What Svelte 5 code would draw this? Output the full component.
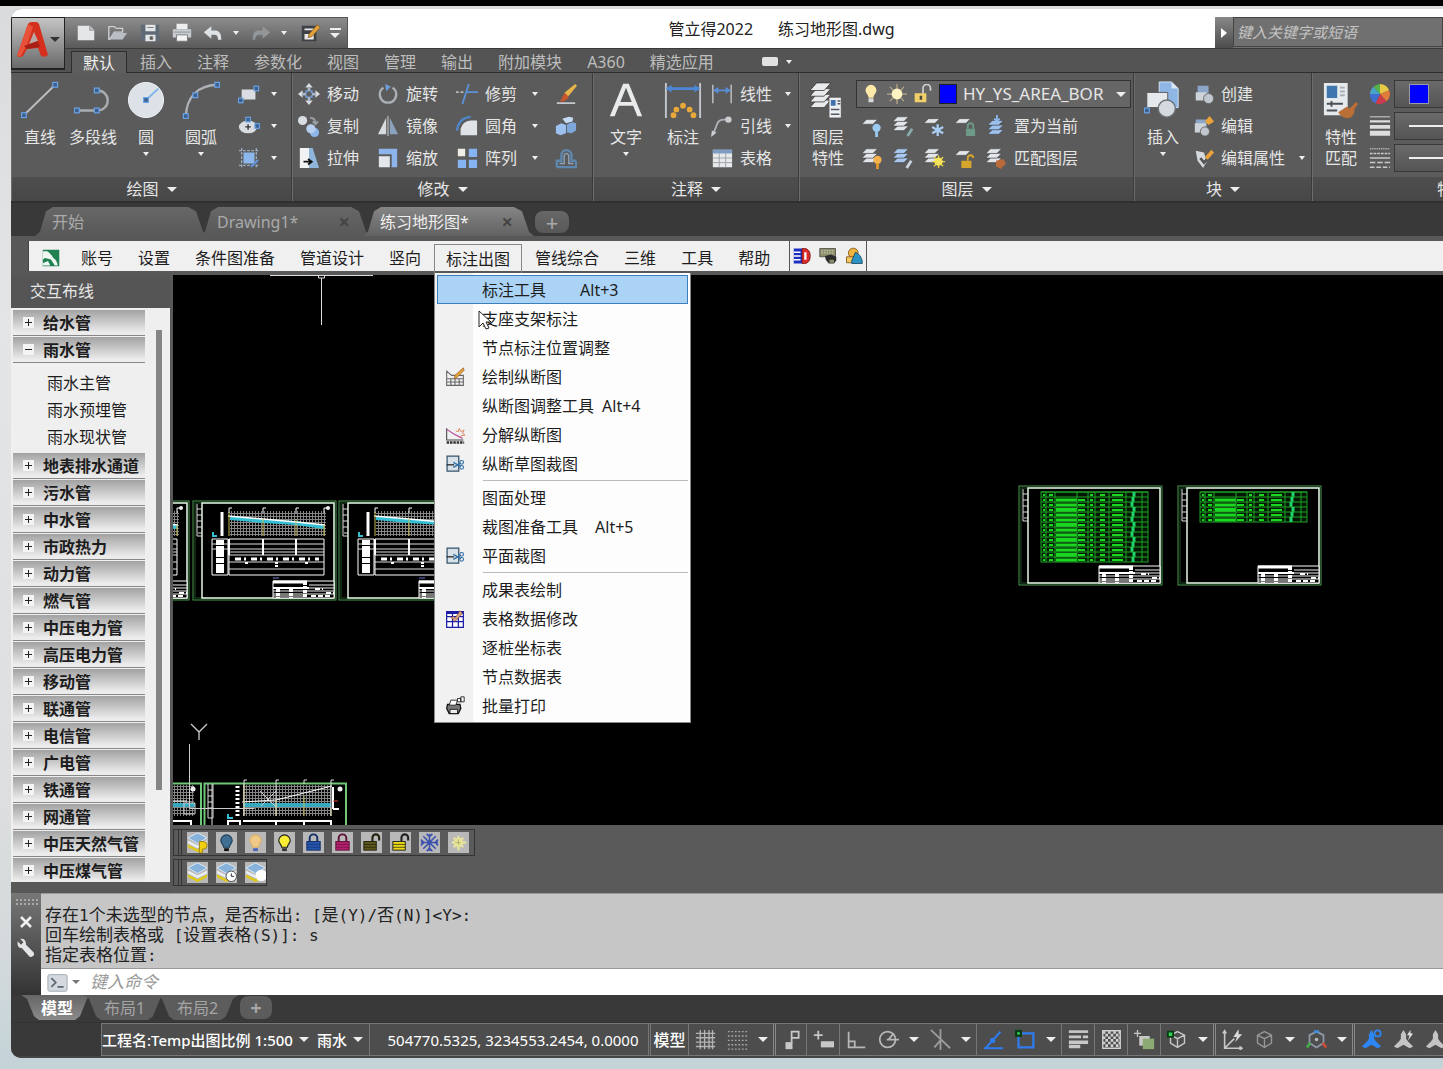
<script>
  const L = '#d9dde2';
  const B = '#6d9fdc';
  const node = (x, y) => `<rect x="${x - 2.5}" y="${y - 2.5}" width="5" height="5" fill="#3c5f8c" stroke="#6aa2e6" stroke-width="1.3"/>`;
  const layer = (x, y, c = '#e2e5e9') =>
    `<path d="M${x + 4} ${y}h12l-5 5h-12z" fill="${c}" stroke="#333" stroke-width=".5"/>`;
  const stack = (c = '#e2e5e9') => layer(2, 12, c) + layer(2, 7, c) + layer(2, 2, c);
  const sheets =
    '<path d="M1 13l10 5 10-5v3l-10 5-10-5z" fill="#e0c814"/><path d="M1 9l10 5 10-5v3l-10 5-10-5z" fill="#e9edf2"/><path d="M1 6l10-5 10 5-10 6z" fill="#86b2dc" stroke="#dbe8f4"/>';
  const bulb = (f, s, n) =>
    `<path d="M11 3a6 6 0 0 0-6 6c0 3 3 4 3 7h6c0-3 3-4 3-7a6 6 0 0 0-6-6z" fill="${f}" stroke="${s}" stroke-width="1.2"/><path d="M8.500 17h5v3h-5z" fill="${n}"/>`;
  const lock = (f, s) =>
    `<path d="M7 10V6.500a4 4 0 0 1 8 0V10" fill="none" stroke="${s}" stroke-width="2"/><rect x="4" y="10" width="14" height="9" fill="${f}" stroke="${s}"/><path d="M4 13h14M4 16h14" stroke="${s}" stroke-width=".6"/>`;
  const openLock = (f, s) =>
    `<path d="M12 10V6a3.500 3.500 0 0 1 7 0v3" fill="none" stroke="${s}" stroke-width="2.200"/><rect x="3" y="10" width="13" height="9" fill="${f}" stroke="${s}"/><path d="M3 13h13M3 16h13" stroke="${s}" stroke-width=".8"/>`;
  const cube = (c) => `<path d="M12 3l8 4v9l-8 5-8-5V7zM4 7l8 4 8-4M12 11v10" fill="none" stroke="${c}" stroke-width="1.600"/>`;
  const person = (c) => `<path d="M12 1l3 5v5l2 3 6 6-4 2-7-4-7 4-4-2 6-6 2-3V6z" fill="${c}"/>`;
  const cut = '<path d="M2.500 2.500h14v18h-14z" fill="#d6e2e8" stroke="#36536b" stroke-width="1.500"/><path d="M2 13h9" stroke="#222" stroke-width="1.500"/><path d="M10 10l9 5M10 16l9-5" stroke="#2f6da6" stroke-width="1.500"/><circle cx="20" cy="10" r="2.200" fill="none" stroke="#2f6da6" stroke-width="1.300"/><circle cx="20" cy="16" r="2.200" fill="none" stroke="#2f6da6" stroke-width="1.300"/>';

  const icons = {
    new: '<path d="M3 4h13l5 5v11H3z" fill="#e4e6e8"/><path d="M16 4v5h5" fill="#bfc3c8" stroke="#888" stroke-width=".8"/>',
    open: '<path d="M2 5h6l2 2h7v4h-9l-5 8H2z" fill="none" stroke="#ccd0d4" stroke-width="1.500"/><path d="M8 12h14l-5 7H3z" fill="#b9bec4"/>',
    save: '<path d="M2 3h20v18H2z" fill="#5f6a76"/><path d="M7 3h11v7H7zM7 14h11v7H7z" fill="#e4e6e8"/><path d="M9 6h7M12 16h3v3h-3z" fill="#555" stroke="#777"/>',
    print: '<path d="M6 2h12v6H6z" fill="#eee"/><path d="M2 8h20v9H2z" fill="#c9cdd1"/><path d="M6 14h12v7H6z" fill="#f3f3f3" stroke="#777"/><path d="M3 11h18" stroke="#8b9095"/>',
    undo: '<path d="M1 11l9-7v5h6q6 1 6 11h-4q0-6-4-6h-4v5z" fill="#dfe2e5"/>',
    redo: '<path d="M23 11l-9-7v5H8q-6 1-6 11h3q0-6 5-6h4v5z" fill="#929699"/>',
    edit: '<path d="M3 4h16v17H3z" fill="#3e4247"/><path d="M6 7h10v2H6zM6 13h10v6H6z" fill="#e8e8e8"/><path d="M20 3l3 3-9 10-4 1 1-4z" fill="#e3a23c" stroke="#7b4d12" stroke-width=".7"/>',
    line: `<path d="M3 36L36 4" stroke="#b9bcc0" stroke-width="2"/>${node(3, 36)}${node(36, 4)}`,
    pline: `<path d="M3 31h22a10.500 10.500 0 0 0 0-21" fill="none" stroke="#a9adb2" stroke-width="2.500"/>${node(3, 31)}${node(24, 31)}${node(24, 10)}`,
    circle: `<circle cx="20" cy="20" r="18.500" fill="#dde2e8" stroke="#f1f3f5"/><path d="M20 20L33 8" stroke="#7fb4e8" stroke-width="2"/>${node(20, 20)}`,
    arc: `<path d="M4 37C5 17 16 5 37 4" fill="none" stroke="#aeb2b7" stroke-width="2.500"/>${node(4, 37)}${node(14, 15)}${node(37, 4)}`,
    rect: `<path d="M4 7h15v11H4z" fill="${L}"/>${node(3, 19)}${node(20, 6)}`,
    ellipse: `<ellipse cx="11" cy="13" rx="10" ry="7" fill="${L}"/><path d="M11 10v6M8 13h6" stroke="#333" stroke-width="1.500"/>${node(11, 5)}${node(21, 12)}`,
    hatch: '<path d="M6 6h12v12H6z" fill="#8db8ee"/><path d="M4 1v22M20 1v22M1 4h22M1 20h22" stroke="#9aa9bd" stroke-width="1.500" stroke-dasharray="3 1.500"/><path d="M14 22l8-8" stroke="#5b97e0" stroke-width="2"/>',
    move: `<path d="M12 0l4 5h-8zM12 24l4-5h-8zM0 12l5-4v8zM24 12l-5-4v8z" fill="${L}"/><path d="M12 5v4M12 15v4M5 12h4M15 12h4" stroke="#a8b9cf" stroke-width="3"/><path d="M8 8h2.500v2.500H8zM13.500 8H16v2.500h-2.500zM8 13.500h2.500V16H8zM13.500 13.500H16V16h-2.500z" fill="${B}"/>`,
    copy: `<circle cx="5" cy="6" r="5" fill="${L}"/><circle cx="18" cy="19" r="5" fill="#8fb6ea"/><circle cx="14" cy="15" r="5" fill="#b9cfee"/><path d="M13 3q6 0 6 6m-3-2l3 3 3-3" fill="none" stroke="#9a9fa5" stroke-width="2"/>`,
    stretch: '<path d="M2 1h10v22H2z" fill="#f0f2f4"/><path d="M12 1h4l7 22H12z" fill="#8fb6da"/><path d="M6 16h8m-3-3l4 3-4 3" stroke="#111" stroke-width="2" fill="none"/>',
    rotate: `<path d="M7 5a9 9 0 1 0 10 0" fill="none" stroke="#aab0b6" stroke-width="2.500"/><path d="M9 1l6 3-5 5z" fill="${B}"/>`,
    mirror: '<path d="M10 3v18H1z" fill="#d7dade"/><path d="M14 3v18h9z" fill="#8aa2bd"/><path d="M12 1v22" stroke="#d7dade"/>',
    scale: '<path d="M2 2h20v20h-6V8H2z" fill="#8db5ec"/><path d="M2 10h12v12H2z" fill="#e3e6ea"/>',
    trim: '<path d="M14 1L7 23" stroke="#5b93da" stroke-width="2"/><path d="M0 10h8" stroke="#b7bbc0" stroke-width="2" stroke-dasharray="3 2"/><path d="M11 10h13" stroke="#5b93da" stroke-width="2"/>',
    fillet: '<path d="M5 22V15q2-8 11-9h7v16z" fill="#dfe3e8"/><path d="M1 17Q3 3 16 2" fill="none" stroke="#4f86c9" stroke-width="2.500"/>',
    array: '<path d="M2 2h8v8H2z" fill="#f0eee4"/><path d="M14 2h9v9h-9zM2 14h9v9H2zM14 14h9v9h-9z" fill="#86b4f2"/>',
    erase: '<path d="M22 1l2 2-10 12-4-4z" fill="#e7b64b"/><path d="M11 11l4 4q-3 6-10 5 3-2 3-5z" fill="#c9562b"/><path d="M2 22h20" stroke="#c5c8cc" stroke-width="2"/>',
    explode: '<path d="M1 12l6-3 5 2v9l-6 2-5-2z" fill="#9cc0f0"/><path d="M13 10l6-2 4 1v8l-5 3-5-1z" fill="#7ea6da"/><path d="M8 4l7-2 5 1-1 4-7 2z" fill="#c4daf5"/>',
    offset: '<path d="M2 22v-7h5V9a5 5 0 0 1 11 0v6h5" fill="none" stroke="#5f88b0" stroke-width="2.500"/><path d="M2 22h21v-7" stroke="#5f88b0" stroke-width="2.500" fill="none"/><path d="M5 18h5V9q2-4 5 0v9h5" fill="none" stroke="#8da4ba" stroke-width="1.500"/>',
    text: '<path d="M3 37L17 3h6l14 34h-5l-4.500-11h-15L8 37zM14 22h12L20 7z" fill="#e8eaec"/>',
    dim: `<path d="M2 2v37M38 2v37" stroke="#c3c7cb" stroke-width="2"/><path d="M3 8h34" stroke="#4d88d6" stroke-width="3"/><path d="M2 8l6-4v8zM38 8l-6-4v8z" fill="#4d88d6"/><g fill="#e8a93a"><circle cx="10" cy="36" r="3"/><circle cx="13" cy="30" r="3"/><circle cx="20" cy="26" r="3"/><circle cx="27" cy="30" r="3"/><circle cx="31" cy="36" r="3"/></g>`,
    linear: '<path d="M2 2v20M22 2v20" stroke="#c3c7cb" stroke-width="1.500"/><path d="M3 8h18" stroke="#5a8fd8" stroke-width="2"/><path d="M3 8l5-4v8zM21 8l-5-4v8z" fill="#5a8fd8"/>',
    leader: '<path d="M2 22l5-13q2-4 7-4h5" fill="none" stroke="#aeb2b7" stroke-width="2"/><circle cx="19" cy="5" r="3.500" fill="#c9cdd2"/><path d="M0 24l1-7 5 2z" fill="#c9cdd2"/>',
    table: '<path d="M2 3h21v19H2z" fill="#e7e9eb"/><path d="M2 3h21v4H2z" fill="#7d9cc4"/><path d="M2 12h21M2 17h21M9 7v15M16 7v15" stroke="#9aa0a7"/>',
    layers: '<g fill="#e8eaec" stroke="#333" stroke-width=".8"><path d="M8 20h15l-7 8H1z"/><path d="M8 14h15l-7 8H1z"/><path d="M8 8h15l-7 8H1z"/><path d="M8 2h15l-7 8H1z"/></g><path d="M21 17h13v22H21z" fill="#edf0f3" stroke="#555"/><path d="M23 20h5v6h-5z" fill="#3f73ad"/><path d="M30 21h3M30 24h3M23 30h9M23 35h9" stroke="#556" stroke-width="1.500"/>',
    bulbOn: '<path d="M12 1a6.500 6.500 0 0 0-6.500 6.500c0 4 3.500 5 3.500 9h6c0-4 3.500-5 3.500-9A6.500 6.500 0 0 0 12 1z" fill="#ffe9a8"/><path d="M9 17h6v5H9z" fill="#d8d8d8"/>',
    sun: '<path d="M12 0v24M0 12h24M3.500 3.500l17 17M20.500 3.500l-17 17" stroke="#b7a887" stroke-width="1.500"/><circle cx="12" cy="12" r="6.500" fill="#fff3c4"/>',
    unlock: '<path d="M12 12V5a4 4 0 0 1 9 0v3" fill="none" stroke="#cfd1d3" stroke-width="2"/><path d="M2 11h14v11H2z" fill="#f0cf6b"/><path d="M8 14h3v5H8z" fill="#4a4a3a"/>',
    l1: layer(2, 5) + '<circle cx="17" cy="14" r="4.500" fill="#9ccaf2"/><path d="M17 18v6" stroke="#9ccaf2" stroke-width="3"/>',
    l2: stack() + '<path d="M17 23l5-8" stroke="#8aa" stroke-width="3"/>',
    l3: layer(2, 4) + '<path d="M16 10v13M10 13l12 7M22 13l-12 7" stroke="#a9cdf5" stroke-width="2.500"/>',
    l4: layer(2, 4) + '<path d="M15 15v-3a3 3 0 0 1 6 0v3" stroke="#6d9a86" fill="none" stroke-width="2"/><path d="M13 15h10v8H13z" fill="#6d9a86"/>',
    l5: '<g transform="translate(2 4)">' + stack('#9dc1ec') + '</g><path d="M13 0v7m-3-3l3 3 3-3" stroke="#8db7ea" stroke-width="2" fill="none"/>',
    m1: stack() + '<circle cx="18" cy="14" r="4.500" fill="#f3b24c"/><path d="M18 18v6" stroke="#e5992b" stroke-width="3"/>',
    m2: stack('#a9c8ee') + '<path d="M16 23l5-8" stroke="#cdd6e0" stroke-width="3"/>',
    m3: stack() + '<path d="M17 9v14M10 16h14M12 11l10 10M22 11l-10 10" stroke="#e9cf3e" stroke-width="1.500"/><circle cx="17" cy="16" r="4.500" fill="#f7e35b"/>',
    m4: layer(2, 4) + '<path d="M15 15v-3a3 3 0 0 1 6 0" stroke="#d6a52e" fill="none" stroke-width="2"/><path d="M8 15h11v8H8z" fill="#d6a52e"/>',
    m5: stack() + '<path d="M12 15l8-2 3 5-6 6-5-3z" fill="#b9693a"/>',
    insert: '<path d="M16 1h13l7 7v20H16z" fill="#8fb7e6" stroke="#d5e4f5"/><path d="M29 1v7h7" fill="#dce9f7"/><path d="M3 12h22v16H3z" fill="#e6e9ec" stroke="#555"/><circle cx="24" cy="29" r="9" fill="#d4d9df" stroke="#6b7077" stroke-width="1.500"/>' + node(3, 31),
    create: '<path d="M5 3h12v9H5z" fill="#8ba6c6"/><path d="M3 10h12v9H3z" fill="#ced3d9"/><circle cx="17" cy="17" r="5.500" fill="#c1c7ce" stroke="#666"/>',
    bedit: '<path d="M3 5h12v9H3z" fill="#8ba6c6"/><path d="M2 9h12v10H2z" fill="#ced3d9"/><circle cx="13" cy="18" r="5" fill="#c1c7ce" stroke="#666"/><path d="M18 1l5 6-6 4-4-4z" fill="#eaa23b"/>',
    attr: '<path d="M3 4l9 2 3 10-4 7-6-8z" fill="#d5d9dd"/><path d="M8 12l4 5 9-10" fill="none" stroke="#555" stroke-width="3"/><path d="M20 3l3 3-7 8-3-3z" fill="#eaa23b"/>',
    props: '<path d="M2 2h25v34H2z" fill="#e7eaed"/><path d="M5 5h11v13H5z" fill="#3f76ae"/><path d="M19 7h5M19 11h5M19 15h5" stroke="#a9afb6" stroke-width="2"/><path d="M5 24h17M10 21v6M5 31h11" stroke="#4a4f55" stroke-width="2"/><path d="M36 22l-7 7-3-2-9 6q4 7 12 6 6-3 5-9l4-6z" fill="#b96f35"/>',
    wheel: '<path d="M12 12V1a11 11 0 0 1 10 7z" fill="#e6c944"/><path d="M12 12l10-4a11 11 0 0 1-3 12z" fill="#e07b39"/><path d="M12 12l7 8a11 11 0 0 1-12 2z" fill="#cc3b4b"/><path d="M12 12L7 22A11 11 0 0 1 1 12z" fill="#3f6fd0"/><path d="M12 12H1a11 11 0 0 1 4-8z" fill="#4aa3c8"/><path d="M12 12L5 4a11 11 0 0 1 7-3z" fill="#58b04b"/>',
    weights: '<path d="M1 2h22" stroke="#ddd"/><path d="M1 7h22" stroke="#ddd" stroke-width="2.500"/><path d="M1 13h22" stroke="#ddd" stroke-width="4"/><path d="M1 20h22" stroke="#ddd" stroke-width="5.500"/>',
    types: '<g stroke="#c9c9c9" stroke-width="1.600"><path d="M1 2h22" stroke-dasharray="1 1"/><path d="M1 7h22" stroke-dasharray="3 1"/><path d="M1 12h22"/><path d="M1 17h22" stroke-dasharray="6 2"/><path d="M1 22h22" stroke-dasharray="5 2"/></g>',
    brand: '<path d="M1 1h22v22H1z" fill="#1f8152"/><path d="M1 3h6q5 3 8 9 5 3 6 10h-4l-5-8-8-2-3 2z" fill="#eef6f1"/><path d="M1 19l7-3 3 6H1z" fill="#eef6f1"/>',
    tb1: '<path d="M1 2h12v20H1z" fill="#1d2fc0"/><path d="M1 7h9M1 12h9M1 17h9" stroke="#fff" stroke-width="2"/><path d="M12 2h5q6 2 6 10t-6 10h-5z" fill="#d92b2b" stroke="#701010"/><path d="M15 7h3v10h-3z" fill="#fff"/>',
    tb2: '<path d="M1 2h21v11H1z" fill="#8d8f6c" stroke="#44463a"/><path d="M3 5h17M3 8h17" stroke="#e5e5cf" stroke-dasharray="2 1.500"/><path d="M8 12l8-2 7 3v5l-3 4h-7l-4-5z" fill="#2b2b2b"/><path d="M14 17h6v4h-6z" fill="#8d8f6c"/>',
    tb3: '<circle cx="11" cy="8" r="6.500" fill="#f0b33c" stroke="#73470d"/><path d="M2 13h11l2 8H2z" fill="#f3c860" stroke="#73470d"/><path d="M14 7q8 4 9 12v3H9v-4z" fill="#2e93c4" stroke="#0e3b57"/>',
    profile: '<path d="M2 5l6 5h14v12H2zM2 14h20M2 18h20M7 14v8M12 14v8M17 14v8" fill="none" stroke="#666" stroke-width="1.300"/><path d="M22 1l1 3-9 9-3 1 1-4z" fill="#e7a13c" stroke="#8a4c10" stroke-width=".7"/>',
    split: '<path d="M2 4v14h20" fill="none" stroke="#444" stroke-width="1.300"/><path d="M2 5l9 6 10 5" stroke="#c05aa8" fill="none" stroke-width="1.500"/><path d="M2 21h21" stroke="#333" stroke-width="3" stroke-dasharray="3 1"/><path d="M13 7l3 1 1-4 2 4 4-2-2 4 3 2-5 1-2 2" fill="none" stroke="#d77a4c"/>',
    cut,
    tedit: '<path d="M2 3h20v19H2zM2 9h20M2 15h20M9 3v19M16 3v19" fill="#fff" stroke="#1c1ca8" stroke-width="1.500"/><path d="M2 3h20v3H2z" fill="#1c1ca8"/><path d="M18 2l3 3-9 10-5-5 3-1 2 2z" fill="#d8a183" stroke="#7d3f22" stroke-width=".7"/>',
    batch: '<path d="M3 10h15l1 5-3 6H5l-3-6z" fill="#777" stroke="#111" stroke-width="1.500"/><path d="M7 5h8l-2 6H5z" fill="#fff" stroke="#111"/><path d="M15 3h4v4h-4zM19 1h4v6h-4z" fill="#fff" stroke="#111"/><path d="M6 16h9v5H6z" fill="#eee" stroke="#111"/>',
    t1: sheets + '<path d="M13 10h4a4 4 0 1 1 0 8h-1v4h-3z" fill="#f2cf13" stroke="#9c8208"/>',
    t2: bulb('#3f7093', '#1e4058', '#111'),
    t3: bulb('#f0c887', '#d9b26c', '#4a66b8'),
    t4: bulb('#f7ee35', '#222', '#333'),
    t5: lock('#2456ad', '#142d66'),
    t6: lock('#b51e6c', '#5e1138'),
    t7: openLock('#5f581d', '#24220c'),
    t8: openLock('#eedd13', '#222'),
    t9: '<path d="M11 2v18M2 11h18M4.500 4.500l13 13M17.500 4.500l-13 13M8 2l3 3 3-3M8 20l3-3 3 3M2 8l3 3-3 3M20 8l-3 3 3 3" stroke="#3a4fae" stroke-width="1.600" fill="none"/>',
    t10: '<path d="M11 4v15M4 11h15M6 6l10 10M16 6L6 16" stroke="#e4e1a0" stroke-width="2.500"/><circle cx="11" cy="11" r="5" fill="#e6e39a"/><path d="M8 11h6M11 8v6" stroke="#8f8d45" stroke-dasharray="1 1"/>',
    u1: sheets,
    u2: sheets + '<circle cx="16" cy="15" r="5.500" fill="#fff" stroke="#444"/><path d="M16 12v3h3" stroke="#222" fill="none"/>',
    u3: sheets + '<circle cx="17" cy="14" r="6" fill="#fff"/>',
    wrench: '<path d="M2 4l4 4 3-3-4-4q7-1 7 7l9 9q2 3-1 5t-5-1l-8-9Q1 13 2 4z" fill="#e3e5e7"/>',
    prompt: '<rect x="1" y="3" width="22" height="19" rx="2" fill="#d3d9df" stroke="#9aa3ac"/><path d="M5 7l5 5-5 5" fill="none" stroke="#5c6670" stroke-width="2"/><path d="M12 17h7" stroke="#5c6670" stroke-width="2"/>',
    grid: '<path d="M6 1v22M11 1v22M16 1v22M20 1v22M1 5h22M1 10h22M1 15h22M1 20h22" stroke="#b4b4b4" stroke-width="1.500"/>',
    dots: '<path d="M1 3h22M1 8h22M1 13h22M1 18h22M1 23h22" stroke="#a8a8a8" stroke-width="1.500" stroke-dasharray="2 2"/>',
    snap: '<path d="M4 15h8v8H4z" fill="#c8c8c8"/><path d="M11 16V3h8v7h-7" fill="none" stroke="#c8c8c8" stroke-width="2"/>',
    infer: '<path d="M1 7h10M6 2v10" stroke="#c8c8c8" stroke-width="2"/><path d="M9 14h15v7H9z" fill="#c8c8c8"/>',
    ortho: '<path d="M3 3v18h19M3 14h7v7" fill="none" stroke="#b8b8b8" stroke-width="2"/>',
    polar: '<circle cx="11" cy="12" r="9" fill="none" stroke="#b8b8b8" stroke-width="2"/><path d="M10 12h14M12 12l6-7" fill="none" stroke="#b8b8b8" stroke-width="2"/>',
    iso: '<path d="M1 1l22 21M12 0v24M12 13l-7 8" stroke="#9d9d9d" stroke-width="2"/>',
    track: '<path d="M1 22h22M3 22L20 3" stroke="#2f7cf0" stroke-width="2.500"/><circle cx="11" cy="13" r="3" fill="#2f7cf0"/>',
    osnap: '<path d="M4 5h17v16H4z" fill="none" stroke="#2f7cf0" stroke-width="2.500"/><path d="M0 1h8v8H0z" fill="#0b3d14"/><circle cx="4" cy="5" r="1.500" fill="#36d45a"/>',
    lw: '<path d="M1 3h22" stroke="#c8c8c8" stroke-width="3"/><path d="M1 9h14M17 9h6" stroke="#c8c8c8" stroke-width="3"/><path d="M1 15h22M1 20h13" stroke="#c8c8c8" stroke-width="4"/>',
    transp: '<path d="M2 2h20v20H2z" fill="none" stroke="#d2d2d2" stroke-width="1.500"/><path d="M2 4h20M2 10h20M2 16h20" stroke="#d2d2d2" stroke-width="3" stroke-dasharray="3 3"/><path d="M5 7h17M5 13h17M5 19h17" stroke="#d2d2d2" stroke-width="3" stroke-dasharray="3 3"/>',
    cycle: '<path d="M0 5h8M4 1v8" stroke="#c8c8c8" stroke-width="1.500"/><path d="M6 8h12v11H6z" fill="#c8c8c8"/><path d="M10 11h13v12H10z" fill="#8cab72"/>',
    o3d: cube('#c8c8c8') + '<path d="M0 2h8v8H0z" fill="#0a3a12"/><path d="M2 4h4v4H2z" fill="#2ed055"/>',
    ucs: '<path d="M3 3v19h19M3 22L14 11M1 5l2-3 2 3M20 20l3 2-3 2" fill="none" stroke="#c8c8c8" stroke-width="1.800"/><path d="M19 0l-6 9h4l-2 6 8-9h-4z" fill="#d9d9d9"/>',
    cube: cube('#969696'),
    gizmo: '<path d="M12 3l8 4v9l-8 5-8-5V7z" fill="none" stroke="#8f9aa8" stroke-width="2"/><path d="M9 3h6" stroke="#3f8fe0" stroke-width="3"/><path d="M1 21l4-5" stroke="#3fae4b" stroke-width="3"/><path d="M19 16l4 5" stroke="#d34b36" stroke-width="3"/><circle cx="12" cy="12" r="2" fill="#bbb"/>',
    an1: person('#2e86f5') + '<circle cx="19" cy="5" r="3.500" fill="#4d4d4d" stroke="#2e86f5" stroke-width="2"/>',
    an2: person('#c4c4c4') + '<path d="M20 1l-4 6h3l-2 6 6-8h-3z" fill="#e5e5e5"/>',
    an3: person('#c4c4c4')
  };

  const ribbonTabs = ['默认', '插入', '注释', '参数化', '视图', '管理', '输出', '附加模块', 'A360', '精选应用'];
  const quick = [
    ['new', '新建'], ['open', '打开'], ['save', '保存'], ['print', '打印']
  ];
  const modify = [
    ['move', '移动'], ['rotate', '旋转'], ['trim', '修剪', 1], ['erase', ''],
    ['copy', '复制'], ['mirror', '镜像'], ['fillet', '圆角', 1], ['explode', ''],
    ['stretch', '拉伸'], ['scale', '缩放'], ['array', '阵列', 1], ['offset', '']
  ];
  const menusBefore = ['账号', '设置', '条件图准备', '管道设计', '竖向'];
  const menusAfter = ['管线综合', '三维', '工具', '帮助'];
  const menuItems = [
    { t: '标注工具', k: 'Alt+3', gap: 'far', on: true },
    { t: '支座支架标注' },
    { t: '节点标注位置调整' },
    { t: '绘制纵断图', i: 'profile' },
    { t: '纵断图调整工具', k: 'Alt+4', gap: 'near' },
    { t: '分解纵断图', i: 'split' },
    { t: '纵断草图裁图', i: 'cut' },
    { sep: true },
    { t: '图面处理' },
    { t: '裁图准备工具', k: 'Alt+5', gap: 'mid' },
    { t: '平面裁图', i: 'cut' },
    { sep: true },
    { t: '成果表绘制' },
    { t: '表格数据修改', i: 'tedit' },
    { t: '逐桩坐标表' },
    { t: '节点数据表' },
    { t: '批量打印', i: 'batch' }
  ];
  const pipes = [
    { t: '给水管' },
    { t: '雨水管', kids: ['雨水主管', '雨水预埋管', '雨水现状管'] },
    ...['地表排水通道', '污水管', '中水管', '市政热力', '动力管', '燃气管', '中压电力管', '高压电力管', '移动管', '联通管', '电信管', '广电管', '铁通管', '网通管', '中压天然气管', '中压煤气管'].map((t) => ({ t }))
  ];
  const status = [
    ['grid', 'dots', '-'], ['snap'], ['infer'], ['ortho', 'polar', '-', 'iso', '-'],
    ['track', 'osnap', '-'], ['lw'], ['transp'], ['cycle'], ['o3d', '-'],
    ['ucs', 'cube', '-', 'gizmo', '-'], ['an1', 'an2', 'an3']
  ];
  const doubled = [1, 9, 10];
  const range = (n) => Array.from({ length: n }, (_, i) => i);
</script>

{#snippet icon(name, size = 22, box = 24)}
  <svg width={size} height={size} viewBox="0 0 {box} {box}" aria-hidden="true">{@html icons[name]}</svg>
{/snippet}

{#snippet big(name, label, arrow, second)}
  <button class="big">
    {@render icon(name, 38, 40)}
    <span>{label}</span>
    {#if second}<span>{second}</span>{/if}
    {#if arrow}<i class="arrow"></i>{/if}
  </button>
{/snippet}

{#snippet small(name, label, arrow)}
  <button class="small" aria-label={label || name}>
    {@render icon(name)}
    {#if label}<span>{label}</span>{/if}
    {#if arrow}<i class="arrow"></i>{/if}
  </button>
{/snippet}

{#snippet frame(x, y)}
  <rect x={x} y={y} width="143" height="99" fill="none" stroke="#4b9a50" />
  <rect x={x + 2} y={y + 2} width="139" height="95" fill="none" stroke="#1f4f24" />
  <path d="M{x + 9} {y + 2}V{y + 97}H{x + 141}V{y + 2}Z" fill="none" stroke="#e6f5e6" stroke-width="1.5" />
  <path d="M{x + 4} {y + 3}v32h5M{x + 4} {y + 8}h5M{x + 4} {y + 14}h5M{x + 4} {y + 20}h5M{x + 4} {y + 26}h5M{x + 5} {y + 32}h4" fill="none" stroke="#ddd" />
{/snippet}

{#snippet titleBlock(x, y)}
  <path d="M{x} {y}h61v17h-61z" fill="#000" stroke="#fff" />
  <path d="M{x} {y + 1}h34" stroke="#fff" stroke-width="3" />
  <path d="M{x} {y + 7}h36" stroke="#fff" stroke-width="2" />
  <path d="M{x + 36} {y + 4}h25M{x + 36} {y + 7}h25M{x} {y + 10}h61M{x} {y + 13}h61M{x} {y + 15}h34" stroke="#eee" />
  <path d="M{x + 32} {y + 1}v16M{x + 18} {y + 8}v9M{x + 5} {y + 8}v9" stroke="#fff" stroke-width="4" stroke-dasharray="3 1" />
  <path d="M{x + 42} {y + 8}h8M{x + 53} {y + 12}h8M{x + 38} {y + 15}h20" stroke="#fff" stroke-width="2" stroke-dasharray="5 2" />
{/snippet}

{#snippet profileGrid(x, y, w, h)}
  <rect x={x} y={y} width={w} height={h} fill="url(#mesh)" />
{/snippet}

{#snippet profileSheet(x, y)}
  {@render frame(x, y)}
  {@render profileGrid(x + 37, y + 10, 96, 25)}
  <path d="M{x + 37} {y + 17}l33 3 33 2 28 4" stroke="#35bfd4" stroke-width="4" fill="none" />
  <path d="M{x + 35} {y + 15}l35 3 33 3 29 3" stroke="#fff" fill="none" stroke-width="1.5" />
  <path d="M{x + 36} {y + 11}v24M{x + 70} {y + 18}v17M{x + 103} {y + 18}v17M{x + 131} {y + 24}v11" stroke="#c4bc55" />
  <path d="M{x + 36} {y + 12}v-5h3M{x + 70} {y + 12}v-5h3M{x + 103} {y + 12}v-5h3M{x + 131} {y + 12}v-5h3" stroke="#fff" fill="none" />
  <path d="M{x + 29} {y + 11}v24" stroke="#fff" stroke-width="3" />
  <circle cx={x + 135} cy={y + 7} r="2" fill="#eee" />
  <path d="M{x + 20} {y + 31}v4h4" stroke="#35bfd4" stroke-width="2" fill="none" />
  <path d="M{x + 19} {y + 38}h16v36h-16zM{x + 36} {y + 38}h95v36h-95z" fill="none" stroke="#fff" />
  <path d="M{x + 19} {y + 43}h112M{x + 19} {y + 48}h112M{x + 36} {y + 51}h95M{x + 36} {y + 54}h95M{x + 36} {y + 61}h95M{x + 36} {y + 68}h95" stroke="#ddd" />
  <path d="M{x + 27} {y + 39}v33" stroke="#fff" stroke-width="8" stroke-dasharray="5 1 11 1" />
  <path d="M{x + 36} {y + 38}v16M{x + 70} {y + 38}v16M{x + 103} {y + 38}v16" stroke="#fff" stroke-width="2" />
  <path d="M{x + 42} {y + 58}h84" stroke="#fff" stroke-width="3" stroke-dasharray="6 3 2 5" />
  <path d="M{x + 52} {y + 62}h76M{x + 82} {y + 65}h6" stroke="#fff" stroke-width="2" stroke-dasharray="3 27" />
  <path d="M{x + 80} {y + 77}h6" stroke="#6677cc" />
  {@render titleBlock(x + 80, y + 80)}
{/snippet}

{#snippet greenSheet(x, y, rows)}
  {@render frame(x, y)}
  <g stroke="#1fa327" fill="none">
    <rect x={x + 22} y={y + 6} width="107" height={rows * 5} fill="#031703" />
    {#each range(rows) as r}
      <path d="M{x + 22} {y + 6 + r * 5}h107" />
      {#if r}
        <path d="M{x + 37} {y + 9 + r * 5}h21" stroke="#19d81f" stroke-width={r % 3 ? 3 : 4} />
        <path d="M{x + 59} {y + 9 + r * 5}h7" stroke="#19d81f" stroke-width="2" />
      {/if}
      <path d="M{x + 24} {y + 9 + r * 5}h2M{x + 30} {y + 9 + r * 5}h4M{x + 71} {y + 9 + r * 5}h3M{x + 81} {y + 9 + r * 5}h5M{x + 93} {y + 9 + r * 5}h11" stroke="#19d81f" stroke-width="2" />
      <path d="M{x + 115 - (r % 3)} {y + 6 + r * 5}v5" stroke="#21d46b" stroke-width="3" />
    {/each}
    <path d="M{x + 27} {y + 6}v{rows * 5}M{x + 36} {y + 6}v{rows * 5}M{x + 58} {y + 6}v{rows * 5}M{x + 69} {y + 6}v{rows * 5}M{x + 76} {y + 6}v{rows * 5}M{x + 90} {y + 6}v{rows * 5}M{x + 107} {y + 6}v{rows * 5}M{x + 123} {y + 6}v{rows * 5}" />
  </g>
  {@render titleBlock(x + 80, y + 80)}
{/snippet}

<div class="desktop">
  <div class="window">
    <header class="titlebar">
      <button class="app" aria-label="应用程序菜单">
        <svg width="34" height="38" viewBox="0 0 34 38" aria-hidden="true">
          <path d="M1 36L12 4q1-2 4-2h4q2 0 3 2l9 31q-3 3-7 1l-3-8-11 1-4 7q-3 2-6 0z" fill="#d5301d" />
          <path d="M12 4l5 3-6 18-6 11q-3 1-4 0z" fill="#e8523a" />
          <path d="M18 12l4 9-9 3z" fill="#b9a7a5" />
          <path d="M8 26l14-5 2 6-13 2z" fill="#a81f13" />
        </svg>
        <i class="arrow dark"></i>
      </button>
      <div class="quick">
        {#each quick as [n, t]}<button aria-label={t}>{@render icon(n, 22)}</button>{/each}
        <button aria-label="放弃">{@render icon('undo', 20)}</button>
        <button class="mini" aria-label="放弃列表"><i class="arrow"></i></button>
        <button aria-label="重做">{@render icon('redo', 20)}</button>
        <button class="mini" aria-label="重做列表"><i class="arrow"></i></button>
        <button aria-label="编辑图形">{@render icon('edit', 22)}</button>
        <button class="mini bar" aria-label="自定义"><i class="arrow wide"></i></button>
      </div>
      <h1><span>管立得2022</span><span>练习地形图.dwg</span></h1>
      <div class="search">
        <button aria-label="展开搜索"><i class="right"></i></button>
        <input type="text" aria-label="搜索" placeholder="键入关键字或短语" />
      </div>
    </header>

    <nav class="ribbon-tabs">
      {#each ribbonTabs as t, i}<button class:active={i === 0}>{t}</button>{/each}
      <button class="collapse" aria-label="最小化功能区"><b></b><i class="arrow"></i></button>
    </nav>

    <section class="ribbon">
      <div class="panel draw">
        <div class="tools">
          {@render big('line', '直线')}
          {@render big('pline', '多段线')}
          {@render big('circle', '圆', true)}
          {@render big('arc', '圆弧', true)}
          <div class="col">
            {@render small('rect', '', true)}
            {@render small('ellipse', '', true)}
            {@render small('hatch', '', true)}
          </div>
        </div>
        <button class="foot">绘图<i class="arrow wide"></i></button>
      </div>
      <div class="panel modify">
        <div class="tools">
          {#each modify as [n, t, a]}{@render small(n, t, a)}{/each}
        </div>
        <button class="foot">修改<i class="arrow wide"></i></button>
      </div>
      <div class="panel note">
        <div class="tools">
          {@render big('text', '文字', true)}
          {@render big('dim', '标注')}
          <div class="col">
            {@render small('linear', '线性', true)}
            {@render small('leader', '引线', true)}
            {@render small('table', '表格')}
          </div>
        </div>
        <button class="foot">注释<i class="arrow wide"></i></button>
      </div>
      <div class="panel layer">
        <div class="tools">
          {@render big('layers', '图层', false, '特性')}
          <div class="col">
            <label class="combo">
              {@render icon('bulbOn', 20)}
              {@render icon('sun', 20)}
              {@render icon('unlock', 20)}
              <b class="swatch"></b>
              <select aria-label="图层"><option>HY_YS_AREA_BOR</option></select>
              <i class="arrow wide"></i>
            </label>
            <div class="icons">
              {#each ['l1', 'l2', 'l3', 'l4'] as n}<button aria-label={n}>{@render icon(n)}</button>{/each}
              {@render small('l5', '置为当前')}
            </div>
            <div class="icons">
              {#each ['m1', 'm2', 'm3', 'm4'] as n}<button aria-label={n}>{@render icon(n)}</button>{/each}
              {@render small('m5', '匹配图层')}
            </div>
          </div>
        </div>
        <button class="foot">图层<i class="arrow wide"></i></button>
      </div>
      <div class="panel block">
        <div class="tools">
          {@render big('insert', '插入', true)}
          <div class="col">
            {@render small('create', '创建')}
            {@render small('bedit', '编辑')}
            {@render small('attr', '编辑属性', true)}
          </div>
        </div>
        <button class="foot">块<i class="arrow wide"></i></button>
      </div>
      <div class="panel props">
        <div class="tools">
          {@render big('props', '特性', false, '匹配')}
          <div class="col">
            {#each ['wheel', 'weights', 'types'] as n, i}
              <div class="prop">
                {@render icon(n)}
                <button class="box" aria-label={n}>{#if i === 0}<b class="swatch"></b>{:else}<b class="rule"></b>{/if}</button>
              </div>
            {/each}
          </div>
        </div>
        <button class="foot">特性<i class="arrow wide"></i></button>
      </div>
    </section>

    <nav class="files">
      <button class="file">开始</button>
      <button class="file">Drawing1*<span class="x">×</span></button>
      <button class="file active">练习地形图*<span class="x">×</span></button>
      <button class="file plus" aria-label="新图形">+</button>
    </nav>

    <div class="menubar">
      <span class="brand">{@render icon('brand', 18)}</span>
      {#each menusBefore as m}<button>{m}</button>{/each}
      <div class="holder">
        <button class="opened">标注出图</button>
        <div class="menu" role="menu">
          {#each menuItems as m}
            {#if m.sep}
              <hr />
            {:else}
              <button class="item" class:on={m.on} role="menuitem">
                <span class="ico">{#if m.i}{@render icon(m.i, 20)}{/if}</span>
                <span>{m.t}</span>
                {#if m.k}<kbd class={m.gap}>{m.k}</kbd>{/if}
              </button>
            {/if}
          {/each}
          <svg class="pointer" width="14" height="21" viewBox="0 0 14 21" aria-hidden="true">
            <path d="M1 1v16l4-4 3 6 3-1-3-6h5z" fill="#fff" stroke="#222" />
          </svg>
        </div>
      </div>
      {#each menusAfter as m}<button>{m}</button>{/each}
      <div class="extra">
        {#each ['tb1', 'tb2', 'tb3'] as n}<button aria-label={n}>{@render icon(n, 18)}</button>{/each}
      </div>
    </div>

    <main>
      <aside>
        <h2>交互布线</h2>
        <div class="tree">
          <div class="list">
            {#each pipes as p}
              <button class="head"><svg width="11" height="11" viewBox="0 0 11 11" aria-hidden="true"><path d="M0 0h11v11H0z" fill="#f4f4f4" /><path d={p.kids ? 'M2 5.5h7' : 'M2 5.5h7M5.500 2v7'} stroke="#222" /></svg>{p.t}</button>
              {#if p.kids}
                <ul>{#each p.kids as k}<li><button>{k}</button></li>{/each}</ul>
              {/if}
            {/each}
          </div>
          <div class="scroll"></div>
        </div>
      </aside>

      <div class="work">
        <svg class="canvas" aria-label="图形">
          <defs>
            <pattern id="mesh" width="3" height="3" patternUnits="userSpaceOnUse">
              <path d="M0 .5h3M.5 0v3" stroke="#858585" />
            </pattern>
          </defs>
          <g transform="translate(-173 -275)">
            {@render profileSheet(46, 501)}
            {@render profileSheet(193, 501)}
            {@render profileSheet(339, 501)}
            {@render greenSheet(1019, 486, 14)}
            {@render greenSheet(1178, 486, 6)}
            <path d="M173 783.500h28v50M204.500 840v-56.500h141.500v60" fill="none" stroke="#6fc777" stroke-width="2" />
            <path d="M208 784v34h5v-34M212 784v50M208 790h5M208 796h5M208 802h5M208 808h5" fill="none" stroke="#ddd" />
            {@render profileGrid(173, 785, 21, 31)}
            {@render profileGrid(243, 785, 88, 31)}
            <path d="M173 805h22M243 805h88" stroke="#35a9bd" stroke-width="4" />
            <path d="M173 801h14M242 802l34-2 56-14" fill="none" stroke="#fff" />
            <path d="M244 784v32M276 800v16M304 796v20M331 808v8" stroke="#c4bc55" />
            <path d="M244 816v-36h3M276 816v-36h3M304 784v-4h3M331 816v-36h3" fill="none" stroke="#ddd" />
            <path d="M237.500 786v30" stroke="#fff" stroke-width="4" stroke-dasharray="2 2" />
            <path d="M333 787v22" stroke="#fff" stroke-width="2" />
            <path d="M333 801h5" stroke="#d44" /><path d="M333 809h6" stroke="#fff" stroke-width="2" />
            <circle cx="340" cy="789" r="2.500" fill="#eee" /><circle cx="193" cy="789" r="2.500" fill="#eee" />
            <path d="M228 814v4h5" stroke="#35bfd4" stroke-width="2" fill="none" />
            <path d="M173 821h18v6M228 821h12v6h-12zM243 821h88v6M276 821v5M304 821v5" fill="none" stroke="#fff" stroke-width="2" />
            <path d="M189.500 744v64.500h65M184 803h11v11h-11zM260 791l15 15M276 791l-15 15" fill="none" stroke="#ccc" />
            <path d="M191 724l8 8 8-8M199 732v8" fill="none" stroke="#ccc" stroke-width="1.300" />
            <path d="M270 275.500h103M318.500 275v3h6v-3M321.500 278v47" fill="none" stroke="#ddd" />
          </g>
        </svg>
        <div class="docks">
          <div class="dock">
            {#each range(10) as i}<button aria-label="图层工具 {i + 1}">{@render icon(`t${i + 1}`, 21, 22)}</button>{/each}
          </div>
          <div class="dock">
            {#each range(3) as i}<button aria-label="图层状态 {i + 1}">{@render icon(`u${i + 1}`, 21, 22)}</button>{/each}
          </div>
        </div>
      </div>
    </main>

    <section class="command">
      <div class="grip">
        <span class="dots"></span>
        <button aria-label="关闭"><svg width="14" height="14" viewBox="0 0 14 14" aria-hidden="true"><path d="M2 2l10 10M12 2L2 12" stroke="#f0f0f0" stroke-width="2.500" /></svg></button>
        <button aria-label="自定义">{@render icon('wrench', 20)}</button>
      </div>
      <div class="console">
        <div class="log">
          <p>存在<tt>1</tt>个未选型的节点，是否标出<tt>: [</tt>是<tt>(Y)/</tt>否<tt>(N)]&lt;Y&gt;:</tt></p>
          <p>回车绘制表格或<tt>&nbsp;[</tt>设置表格<tt>(S)]: s</tt></p>
          <p>指定表格位置<tt>:</tt></p>
        </div>
        <div class="entry">
          <button aria-label="最近使用的命令">{@render icon('prompt', 21)}<i class="arrow gray"></i></button>
          <input type="text" aria-label="命令" placeholder="键入命令" />
        </div>
      </div>
    </section>

    <nav class="layouts">
      <button class="active">模型</button>
      <button>布局1</button>
      <button>布局2</button>
      <button class="plus" aria-label="新建布局">+</button>
    </nav>

    <footer>
      <div class="seg project">
        <button>工程名:Temp出图比例 1:500<i class="arrow wide"></i></button>
        <button>雨水<i class="arrow wide"></i></button>
      </div>
      <div class="seg coords">504770.5325, 3234553.2454, 0.0000</div>
      <div class="seg model"><button>模型</button></div>
      {#each status as s, i}
        <div class="seg" class:single={s.length === 1} class:doubled={doubled.includes(i)}>
          {#each s as n}
            {#if n === '-'}
              <button class="drop" aria-label="选项"><i class="arrow wide"></i></button>
            {:else}
              <button class="tool" aria-label={n}>{@render icon(n, 21)}</button>
            {/if}
          {/each}
        </div>
      {/each}
    </footer>
  </div>
</div>

<style>
  :global(body) { margin: 0; background: #dfe1e3; overflow: hidden; }
  .desktop {
    box-sizing: border-box;
    height: 100vh;
    padding: 3px 0 11px 11px;
    border-top: 6px solid #000;
    background: linear-gradient(#d9dbdd, #e3e5e6 30%, #dcdedf 75%, #d3d9db 90%, #c3d3d8);
    font: 16px/24px "Noto Sans", "Noto Sans CJK SC", sans-serif;
    color: #e6e6e6;
    overflow: hidden;
  }
  .window {
    display: flex;
    flex-direction: column;
    height: 100%;
    border-radius: 10px 0 0 10px;
    overflow: hidden;
    background: #585858;
    white-space: nowrap;
  }
  button, input, select { font: inherit; color: inherit; border: 0; padding: 0; margin: 0; background: none; }
  button { display: flex; align-items: center; flex: none; }
  svg { flex: none; display: block; }
  .arrow { flex: none; width: 0; height: 0; border: 3px solid transparent; border-top: 4px solid #eee; border-bottom: 0; }
  .arrow.wide { border-width: 5px 5px 0; }
  .arrow.dark { border-width: 5px 5px 0; border-top-color: #333; }
  .arrow.gray { border-width: 4px 4px 0; border-top-color: #777; }
  .right { border: 5px solid transparent; border-left: 6px solid #fff; border-right: 0; }

  .titlebar { display: flex; height: 31px; padding-top: 8px; background: #fff; color: #222; flex: none; }
  .app {
    position: relative; z-index: 2; align-self: flex-start;
    width: 54px; height: 53px; box-sizing: border-box; padding: 0 0 8px 4px;
    border: 1px solid #222; border-bottom-width: 2px; background: linear-gradient(#c4c4c4, #6a6a6a);
  }
  .quick { display: flex; align-items: center; gap: 10px; width: 283px; box-sizing: border-box; padding-left: 10px; background: linear-gradient(#8c8c8c, #5a5a5a); border: 1px solid #555; border-width: 1px 1px 0 0; }
  .quick .mini { width: 8px; }
  .quick .bar { flex-direction: column; gap: 3px; }
  .quick .bar::before { content: ""; width: 11px; height: 2px; background: #eee; }
  h1 { flex: 1; display: flex; justify-content: center; gap: 25px; margin: 0; font: inherit; }
  .search { display: flex; width: 228px; background: #707070; color: #ddd; }
  .search button { width: 18px; justify-content: center; background: linear-gradient(#888, #4c4c4c); }
  .search input { flex: 1; min-width: 0; border: 1px solid #444; margin-bottom: 1px; padding-left: 3px; font-style: italic; font-size: 15px; }
  input::placeholder { color: #c4c4c4; opacity: 1; }

  .ribbon-tabs { display: flex; gap: 1px; height: 25px; box-sizing: border-box; padding-left: 60px; background: #545454; border-top: 1px solid #3a3a3a; border-bottom: 1px solid #2e2e2e; color: #bdbdbd; flex: none; }
  .ribbon-tabs button { padding: 0 12px; height: 25px; }
  .ribbon-tabs .active { position: relative; background: #5e5e5e; border: 1px solid #2e2e2e; border-bottom: 0; padding: 0 11px; color: #f0f0f0; margin-top: 2px; height: 22px; }
  .ribbon-tabs .collapse { gap: 8px; margin-left: 23px; }
  .collapse b { width: 16px; height: 9px; border-radius: 2px; background: #e2e2e2; }

  .ribbon { display: flex; height: 128px; flex: none; border-bottom: 2px solid #2f2f2f; background: #5b5b5b; overflow: hidden; }
  .panel { box-sizing: border-box; display: flex; flex-direction: column; border-left: 1px solid #6c6c6c; border-right: 1px solid #3b3b3b; flex: none; }
  .tools { flex: 1; display: flex; padding-top: 5px; }
  .foot { height: 24px; gap: 8px; justify-content: center; background: linear-gradient(#4e4e4e, #474747); }
  .draw { width: 281px; } .modify { width: 301px; } .note { width: 206px; } .layer { width: 335px; } .block { width: 178px; } .props { width: 300px; }
  .big { flex-direction: column; align-self: flex-start; width: 56px; padding-top: 3px; line-height: 21px; }
  .big svg { margin-bottom: 8px; }
  .big .arrow { margin-top: 4px; }
  .col { display: flex; flex-direction: column; }
  .small { height: 32px; gap: 7px; }
  .small .arrow { margin-left: 8px; }
  .draw .small .arrow { margin-left: 4px; }
  .draw .big:nth-child(2) { width: 50px; } .draw .big:nth-child(4) { width: 54px; }
  .draw .col { padding-left: 10px; }
  .modify .tools { display: grid; grid-template-columns: 79px 79px 99px 22px; grid-auto-rows: 32px; padding-left: 5px; }
  .note .big:first-child { width: 64px; } .note .big:nth-child(2) { width: 50px; }
  .note .col { padding-left: 3px; }
  .note .small .arrow { margin-left: 6px; }
  .layer .col { flex: 1; }
  .combo { display: flex; align-items: center; gap: 6px; box-sizing: border-box; height: 28px; margin: 2px 2px 2px 0; padding: 0 4px; background: #666; border: 1px solid #333; }
  .combo select { flex: 1; min-width: 0; appearance: none; font-size: 17px; }
  .swatch { flex: none; width: 16px; height: 18px; background: #00f; border: 1px solid #222; }
  .icons { display: flex; gap: 9px; height: 32px; align-items: center; padding-left: 5px; }
  .block .col { padding-left: 2px; }
  .block .small { gap: 6px; }
  .prop { display: flex; align-items: center; gap: 3px; height: 32px; }
  .box { width: 180px; height: 28px; box-sizing: border-box; padding-left: 14px; border: 1px solid #383838; background: linear-gradient(#6a6a6a, #555); }
  .box .swatch { border-color: #99a; width: 18px; }
  .rule { width: 120px; height: 2px; background: #eee; }

  .files { display: flex; box-sizing: border-box; height: 38px; padding: 4px 0 5px 24px; background: linear-gradient(#393939 0 33px, #585858 33px); color: #aaa; flex: none; }
  .file { position: relative; z-index: 0; width: 163px; padding: 0 13px 0 17px; justify-content: space-between; box-sizing: border-box; height: 29px; }
  .file::before { content: ""; position: absolute; z-index: -1; inset: 0 -8px 0 0; background: linear-gradient(#676767, #585858); clip-path: polygon(0 100%, 5px 85%, 11px 15%, 18px 0, calc(100% - 20px) 0, calc(100% - 12px) 15%, calc(100% - 5px) 85%, 100% 100%); }
  .file.active { color: #eee; }
  .file.active::before { background: linear-gradient(#858585, #626262); }
  .file.plus { width: 34px; margin-left: 9px; padding: 0 12px; font-size: 22px; justify-content: center; }
  .file.plus::before { inset: 4px 0 3px 0; border-radius: 8px; clip-path: none; }
  .x { font-size: 20px; color: #444; font-weight: 700; }
  .file:first-child { width: 165px; }

  .menubar { display: flex; gap: 1px; height: 30px; flex: none; margin-left: 17px; background: #f0f0f0; color: #1d1d1d; border-left: 1px solid #444; position: relative; z-index: 3; }
  .menubar > button { padding: 0 12px; height: 33px; }
  .brand { display: flex; align-items: center; padding: 0 8px 0 13px; height: 33px; }
  .holder { position: relative; }
  .opened { box-sizing: border-box; border: 1px solid #888; border-bottom: 0; padding: 0 11px; height: 29px; margin-top: 3px; }
  .menu { position: absolute; left: 0; top: 32px; width: 257px; box-sizing: border-box; padding: 2px 2px; border: 1px solid #888; border-top: 0; background: linear-gradient(90deg, #f1f1f1 38px, #fdfdfd 38px); }
  .item { width: 100%; height: 29px; box-sizing: border-box; border: 1px solid transparent; }
  .item.on { background: #aad3f5; border-color: #3c7fbd; }
  .ico { width: 37px; padding-left: 7px; }
  kbd { font: inherit; }
  .far { margin-left: 34px; } .near { margin-left: 8px; } .mid { margin-left: 17px; }
  hr { margin: 2px 0 2px 46px; border: 0; height: 1px; background: #bbb; }
  .pointer { position: absolute; left: 43px; top: 37px; }
  .extra { display: flex; gap: 8px; padding: 0 3px; margin-left: 6px; border: 1px solid #555; border-width: 0 1px; }

  main { flex: 1; min-height: 0; display: flex; padding-top: 4px; }
  aside { width: 159px; display: flex; flex-direction: column; margin: 0 3px 11px 0; flex: none; }
  h2 { margin: 0; font: inherit; padding: 4px 19px 5px; background: #555; }
  .tree { flex: 1; min-height: 0; display: flex; background: #efefef; color: #1d1d1d; overflow: hidden; padding: 1px 0 0 2px; }
  .list { width: 132px; flex: none; }
  .head { width: 100%; height: 27px; box-sizing: border-box; padding-left: 10px; gap: 9px; font-weight: 700; background: linear-gradient(#a2a2a2, #ececec 90%); border-bottom: 1px solid #888; border-top: 1px solid #eee; overflow: hidden; }
  ul { list-style: none; margin: 0; padding: 6px 0 2px; }
  li button { height: 27px; padding-left: 34px; }
  .scroll { width: 6px; height: 460px; margin: 21px 0 0 11px; background: #858585; }
  .work { flex: 1; min-width: 0; display: flex; flex-direction: column; }
  .canvas { flex: 1; min-height: 0; width: 100%; background: #000; }
  .docks { display: flex; flex-direction: column; align-items: flex-start; gap: 3px; padding: 4px 0 7px; background: #5a5a5a; }
  .dock { display: flex; gap: 8px; padding: 2px 0 2px 13px; border: 1px solid #333; box-sizing: border-box; height: 27px; background: linear-gradient(90deg, transparent 4px, #333 4px 5px, transparent 5px 7px, #333 7px 8px, transparent 8px); }
  .dock:first-child { padding-right: 5px; }
  .dock button { background: #b8b8b8; height: 21px; }

  .command { display: flex; flex: none; color: #222; }
  .grip { width: 30px; display: flex; flex-direction: column; align-items: center; gap: 9px; padding-top: 5px; box-sizing: border-box; background: linear-gradient(#777, #333); }
  .grip .dots { width: 23px; height: 8px; background: radial-gradient(circle, #aaa 1px, transparent 1px) 0 0 / 4px 4px; }
  .console { flex: 1; min-width: 0; background: #c6c6c6; }
  .log { padding: 11px 0 3px 4px; font-size: 17px; line-height: 20px; border-top: 1px solid #999; }
  p { margin: 0; height: 20px; }
  tt { font: 16px/20px "DejaVu Sans Mono", monospace; }
  .entry { display: flex; height: 27px; padding-left: 6px; gap: 10px; background: #fff; border-top: 1px solid #999; box-sizing: border-box; }
  .entry button { gap: 4px; }
  .entry input { flex: 1; font-style: italic; font-size: 17px; min-width: 0; }
  .entry input::placeholder { color: #999; }

  .layouts { display: flex; height: 28px; flex: none; padding-left: 15px; background: #393939; color: #a5a5a5; border-bottom: 1px solid #333; box-sizing: border-box; }
  .layouts button { position: relative; z-index: 0; width: 73px; justify-content: center; height: 25px; }
  .layouts button::before { content: ""; position: absolute; z-index: -1; inset: 0 -5px 0 -5px; background: #5c5c5c; clip-path: polygon(0 0, 6px 15%, 13px 85%, 18px 100%, calc(100% - 18px) 100%, calc(100% - 13px) 85%, calc(100% - 6px) 15%, 100% 0); }
  .layouts .active { color: #fff; font-weight: 700; width: 62px; }
  .layouts .active::before { background: linear-gradient(#666, #8a8a8a); }
  .layouts .plus { width: 32px; margin-left: 6px; font-size: 20px; font-weight: 700; }
  .layouts .plus::before { inset: 1px 0; border-radius: 8px; clip-path: none; }

  footer { display: flex; flex: none; height: 35px; box-sizing: border-box; padding-left: 90px; border-bottom: 2px solid #444; background: linear-gradient(90deg, #393939 90px, #4d4d4d 90px); color: #fff; overflow: hidden; }
  .seg { display: flex; flex: none; border: 1px solid #777; border-right: 0; box-sizing: border-box; }
  .seg.single { width: 33px; }
  .seg.doubled { border-left: 3px double #888; }
  .project { width: 268px; gap: 8px; font-size: 15px; font-weight: 500; }
  .project button { gap: 6px; }
  .coords { width: 279px; align-items: center; justify-content: center; padding-left: 8px; font-size: 15px; }
  .seg.model { width: 40px; justify-content: center; border-left: 3px double #777; font-weight: 500; }
  .tool { width: 32px; justify-content: center; }
  .drop { width: 20px; justify-content: center; }
</style>
